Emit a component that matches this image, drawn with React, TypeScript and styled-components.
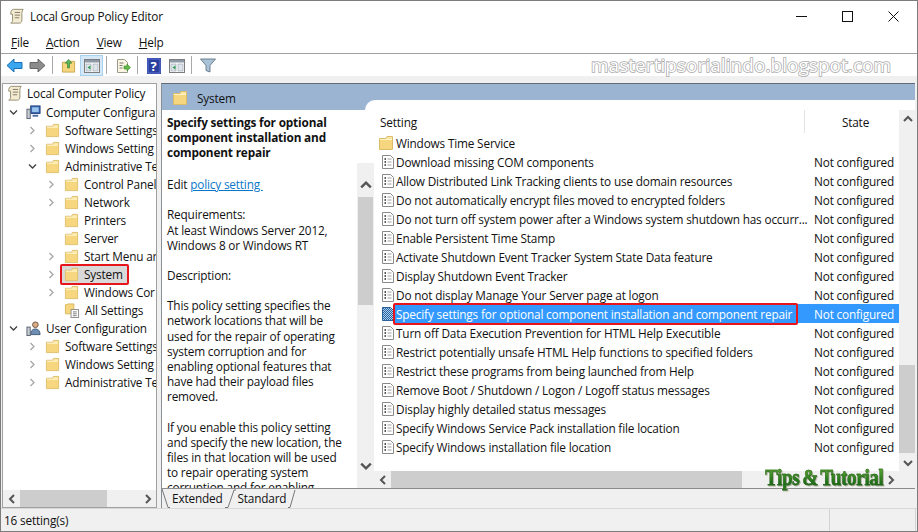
import styled, { createGlobalStyle } from "styled-components";

const GlobalStyle = createGlobalStyle`
	html, body {
		margin: 0;
		padding: 0;
		background: #f0f0f0;
	}
	* {
		box-sizing: border-box;
	}
	svg {
		flex-shrink: 0;
	}
`;

const FOLDERS = "#f6d67e";

const Folder = ({ size = 15 }: { size?: number }) => (
	<svg width={size} height={size} viewBox="0 0 16 16">
		<path d="M1.5 3.5V14.500h13V1.500H9L8 3.500z" fill="#fbe7a6" stroke="#dcbc68" />
		<rect x="2" y="5" width="12" height="9" fill={FOLDERS} />
		<path d="M2 4.500h12" stroke="#fff3c8" />
	</svg>
);

const PolicyIcon = ({ selected = false }: { selected?: boolean }) => (
	<svg width="14" height="16" viewBox="0 0 14 16">
		<defs>
			<pattern id="dither" width="2" height="2" patternUnits="userSpaceOnUse">
				<rect width="2" height="2" fill="#a9d0f5" />
				<rect width="1" height="1" fill="#2a6299" />
				<rect x="1" y="1" width="1" height="1" fill="#2a6299" />
			</pattern>
		</defs>
		<path
			d="M1.500 1.500h8l3 3v10h-11z"
			fill={selected ? "url(#dither)" : "#fff"}
			stroke={selected ? "#2a6299" : "#8a8a8a"}
		/>
		{!selected && (
			<>
				<path d="M3.500 5h1.500M3.500 8h1.500M3.500 11h1.500" stroke="#222" strokeWidth="1.400" />
				<path d="M6.500 5h4M6.500 8h4M6.500 11h4" stroke="#a0a0a0" />
			</>
		)}
	</svg>
);

const Scroll = ({ size = 16 }: { size?: number }) => (
	<svg width={size} height={size} viewBox="0 0 18 18">
		<path d="M5 1.500h11c-1 1-1.500 3-1.500 5v7c0 2-1 3.500-2.500 3.500H2c1-.5 2-1.500 2-3V7H2C1.500 4.500 3 1.500 5 1.500z" fill="#f4ecd2" stroke="#8c8468" />
		<path d="M6.500 5h6M6.500 8h6M6.500 11h5" stroke="#77705a" />
	</svg>
);

const Computer = () => (
	<svg width="15" height="16" viewBox="0 0 16 16">
		<rect x="5" y="1.500" width="10" height="8" fill="#3e6fb8" stroke="#1f3f78" />
		<rect x="6.500" y="3" width="7" height="5" fill="#9cc5ee" />
		<rect x="1" y="5" width="3.500" height="10" fill="#c9ced6" stroke="#56606e" />
		<path d="M7 11h6v2H7z" fill="#4b6aa0" />
	</svg>
);

const UserIcon = () => (
	<svg width="15" height="17" viewBox="0 0 16 17">
		<circle cx="10" cy="4.500" r="3" fill="#d9ad86" stroke="#6c5240" />
		<path d="M5 15c0-4 2-6 5-6s5 2 5 6z" fill="#6f8fb4" stroke="#3f5874" />
		<rect x="1" y="7" width="3.500" height="9" fill="#c9ced6" stroke="#56606e" />
	</svg>
);

const AllSettingsIcon = () => (
	<svg width="16" height="17" viewBox="0 0 17 17">
		<path d="M1.500 2.500V12h9V1.500H5z" fill={FOLDERS} stroke="#d9b65c" />
		<rect x="7.500" y="7.500" width="8" height="8.500" fill="#fff" stroke="#8a8a8a" />
		<path d="M9.500 10h4M9.500 12h4M9.500 14h4" stroke="#777" />
	</svg>
);

const ROTATION = { right: 0, down: 90, left: 180, up: 270 };

const ChevronSvg = styled.svg<{ $dir: keyof typeof ROTATION }>`
	transform: rotate(${(p) => ROTATION[p.$dir]}deg);
`;

const Chevron = ({ dir, size = 10 }: { dir: keyof typeof ROTATION; size?: number }) => (
	<ChevronSvg $dir={dir} width={size} height={size} viewBox="0 0 10 10">
		<path d="M3 1l4 4-4 4" fill="none" stroke="#555" strokeWidth="2" />
	</ChevronSvg>
);

const TreeChevron = ({ dir }: { dir: "right" | "down" }) => (
	<svg width="9" height="9" viewBox="0 0 9 9">
		{dir === "right" ? (
			<path d="M2.500 1l3.500 3.500L2.500 8" fill="none" stroke="#a6a6a6" strokeWidth="1.300" />
		) : (
			<path d="M1 2.500l3.500 3.500L8 2.500" fill="none" stroke="#404040" strokeWidth="1.300" />
		)}
	</svg>
);

const BackIcon = () => (
	<svg width="17" height="15" viewBox="0 0 17 15">
		<path d="M8 1L1 7.500 8 14v-3.500h8v-6H8z" fill="#3aa6ee" stroke="#1a6fb5" />
	</svg>
);

const ForwardIcon = () => (
	<svg width="17" height="15" viewBox="0 0 17 15">
		<path d="M9 1l7 6.500L9 14v-3.500H1v-6h8z" fill="#8c8c8c" stroke="#666" />
	</svg>
);

const UpIcon = () => (
	<svg width="15" height="16" viewBox="0 0 16 16">
		<path d="M1.500 4v10.500h13V3H7L6 4z" fill={FOLDERS} stroke="#c9a650" />
		<path d="M8 1L4.500 5H7v5h2V5h2.500z" fill="#5cb85c" stroke="#2f7d32" strokeWidth=".7" />
	</svg>
);

const PaneIcon = ({ accent }: { accent: string }) => (
	<svg width="16" height="14" viewBox="0 0 16 14">
		<rect x=".5" y=".5" width="15" height="13" fill="#fff" stroke="#7d7d7d" />
		<rect x="1" y="1" width="14" height="2.500" fill="#8d99a8" />
		<rect x="2" y="5" width="5" height="7" fill="#dde3ea" stroke="#9aa3ad" strokeWidth=".6" />
		<rect x="9" y="5" width="5" height="7" fill="#dde3ea" stroke="#9aa3ad" strokeWidth=".6" />
		<path d="M6.500 6.500L3.500 8.500l3 2z" fill={accent} />
	</svg>
);

const ExportIcon = () => (
	<svg width="16" height="16" viewBox="0 0 16 16">
		<path d="M2.500 1.500h7l3 3v10h-10z" fill="#fbf6e4" stroke="#9a9a8a" />
		<path d="M4.500 5h4M4.500 7.500h3M4.500 10h3" stroke="#777" />
		<path d="M9 8h3V6l3.500 3.500L12 13v-2H9z" fill="#62b94a" stroke="#3a8a2a" strokeWidth=".6" />
	</svg>
);

const HelpIcon = () => (
	<svg width="14" height="16" viewBox="0 0 14 16">
		<rect width="14" height="16" fill="#2b3f9e" />
		<rect x="1" y="1" width="12" height="14" fill="none" stroke="#5f74d0" />
	</svg>
);

const FilterIcon = () => (
	<svg width="16" height="15" viewBox="0 0 16 15">
		<path d="M.5 1h15L10 7.500V14l-4-1.500v-5z" fill="#a9c2d8" stroke="#6f7f8e" />
	</svg>
);

const MinimizeIcon = () => (
	<svg width="11" height="11" viewBox="0 0 11 11">
		<path d="M0 5.500h11" stroke="#111" />
	</svg>
);

const MaximizeIcon = () => (
	<svg width="11" height="11" viewBox="0 0 11 11">
		<rect x=".5" y=".5" width="10" height="10" fill="none" stroke="#111" />
	</svg>
);

const CloseIcon = () => (
	<svg width="11" height="11" viewBox="0 0 11 11">
		<path d="M.5.500l10 10M10.500.500l-10 10" stroke="#111" />
	</svg>
);

const Window = styled.div`
	position: relative;
	display: flex;
	flex-direction: column;
	width: 918px;
	height: 532px;
	overflow: hidden;
	background: #f0f0f0;
	border: 1px solid #7c7c7c;
	font-family: "Open Sans", "Noto Sans", sans-serif;
	font-size: 11.8px;
	letter-spacing: -0.17px;
	color: #111;
`;

const TitleBar = styled.div`
	display: flex;
	align-items: center;
	height: 30px;
	padding: 0 0 0 8px;
	background: #fff;
`;

const TitleText = styled.span`
	margin-left: 5px;
	flex: 1;
`;

const WindowButton = styled.div`
	display: flex;
	align-items: center;
	justify-content: center;
	width: 45px;
	height: 28px;
	margin-right: 1px;
`;

const MenuBar = styled.div`
	display: flex;
	align-items: center;
	gap: 17px;
	height: 23px;
	padding: 0 0 0 10px;
	background: #fff;
	border-bottom: 1px solid #a0a0a0;
`;

const Toolbar = styled.div`
	display: flex;
	align-items: flex-end;
	height: 22px;
	padding-left: 2px;
	background: #fff;
`;

const ToolButton = styled.div<{ $active?: boolean }>`
	display: flex;
	align-items: center;
	justify-content: center;
	width: 23px;
	height: 21px;
	background: ${(p) => (p.$active ? "#d5e8f7" : "transparent")};
	border: 1px solid ${(p) => (p.$active ? "#a9d2ee" : "transparent")};
`;

const HelpButton = styled(ToolButton)`
	position: relative;
	&::after {
		content: "?";
		position: absolute;
		color: #fff;
		font-weight: 700;
		font-size: 13px;
	}
`;

const ToolDivider = styled.div`
	width: 1px;
	height: 18px;
	margin: 0 4px 2px 3px;
	background: #a8a8a8;
`;

const Body = styled.div`
	display: flex;
	flex: 1;
	gap: 4px;
	min-height: 0;
	padding: 7px 2px 0 1px;
`;

const TreePane = styled.div`
	display: flex;
	flex-direction: column;
	width: 155px;
	height: 425px;
	background: #fff;
	border: 1px solid #a0a0a0;
`;

const TreeList = styled.div`
	flex: 1;
	overflow: hidden;
`;

const TreeRow = styled.div<{ $depth: number; $top?: boolean }>`
	display: flex;
	align-items: center;
	height: 18px;
	margin-bottom: ${(p) => (p.$top ? 1 : 0)}px;
	padding-left: ${(p) => (p.$top ? 4 : 6 + p.$depth * 19)}px;
	white-space: nowrap;
`;

const TreeArrow = styled.span`
	display: inline-flex;
	justify-content: center;
	flex-shrink: 0;
	width: 9px;
	margin-right: 8px;
`;

const TreeLabel = styled.span<{ $top?: boolean }>`
	margin-left: ${(p) => (p.$top ? 1 : 2)}px;
	padding: 0 3px;
`;

const SelectedBox = styled.span`
	display: inline-flex;
	align-items: center;
	height: 21px;
	margin-left: -4px;
	padding: 0 1px 0 2px;
	background: #d9d9d9;
	border: 2px solid #e8141c;
	border-radius: 2px;
`;

const HScroll = styled.div`
	display: flex;
	align-items: center;
	height: 17px;
	flex-shrink: 0;
	background: #f0f0f0;
`;

const ScrollCap = styled.span`
	display: flex;
	align-items: center;
	justify-content: center;
	width: 17px;
	height: 17px;
	flex-shrink: 0;
`;

const Track = styled.div`
	flex: 1;
	height: 100%;
`;

const Thumb = styled.div<{ $w: number }>`
	width: ${(p) => p.$w}px;
	height: 100%;
	background: #cdcdcd;
`;

const DetailPane = styled.div`
	position: relative;
	display: flex;
	flex-direction: column;
	flex: 1;
	min-width: 0;
	height: 425px;
	border-top: 1px solid #5f6b78;
	border-left: 1px solid #8a8f96;
`;

const DetailHeader = styled.div`
	display: flex;
	align-items: flex-start;
	gap: 9px;
	height: 16px;
	padding: 6px 0 0 10px;
	background: #9ab4d2;
	z-index: 1;
`;

const HeaderLabel = styled.span`
	line-height: 16px;
`;

const Content = styled.div`
	position: relative;
	display: flex;
	height: 388px;
	background: #9ab4d2;
`;

const DescColumn = styled.div`
	display: flex;
	flex-direction: column;
	width: 203px;
	flex-shrink: 0;
	padding-top: 10px;
`;

const DescBody = styled.div`
	flex: 1;
	padding: 4.5px 20px 0 5px;
	background: #fff;
	line-height: 15.2px;
	overflow: hidden;
	p {
		margin: 0 0 15px;
	}
	a {
		color: #0a78c8;
		text-decoration: underline;
	}
`;

const DescTitle = styled.p`
	font-weight: 700;
	padding-bottom: 2px;
`;

const ListColumn = styled.div`
	display: flex;
	flex-direction: column;
	flex: 1;
	min-width: 0;
	background: #fff;
	border-top-left-radius: 10px;
`;

const MidScroll = styled.div`
	position: absolute;
	left: 195px;
	top: 63px;
	display: flex;
	flex-direction: column;
	width: 17px;
	height: 325px;
	padding: 13px 0 14px;
	background: #f0f0f0;
`;

const MidTrack = styled.div`
	flex: 1;
	padding: 4px 1px 0;
`;

const MidThumb = styled.div`
	height: 108px;
	background: #cdcdcd;
`;

const ListMain = styled.div`
	display: flex;
	flex: 1;
	min-height: 0;
`;

const ListRows = styled.div`
	flex: 1;
	min-width: 0;
	overflow: hidden;
`;

const HeaderRow = styled.div`
	display: flex;
	align-items: center;
	height: 33px;
	padding: 10px 0 0 15px;
`;

const HeaderName = styled.span`
	flex: 1;
`;

const HeaderState = styled.span`
	display: flex;
	align-items: center;
	justify-content: center;
	width: 95px;
	height: 23px;
	padding-left: 7px;
	border-left: 1px solid #e3e3e3;
`;

const Row = styled.div`
	display: flex;
	align-items: center;
	height: 19px;
	padding-left: 15px;
	white-space: nowrap;
`;

const RowIcon = styled.span`
	display: flex;
	align-items: center;
	justify-content: center;
	width: 15px;
	margin-right: 1px;
`;

const RowFolderIcon = styled(RowIcon)`
	justify-content: flex-start;
	width: 17px;
	margin-left: -2px;
`;

const RowBody = styled.div<{ $selected?: boolean }>`
	display: flex;
	align-items: center;
	flex: 1;
	height: 19px;
	background: ${(p) => (p.$selected ? "#3399ff" : "transparent")};
	color: ${(p) => (p.$selected ? "#fff" : "#111")};
`;

const RowName = styled.span<{ $selected?: boolean }>`
	display: flex;
	align-items: center;
	flex-shrink: 0;
	width: ${(p) => (p.$selected ? 405 : 418)}px;
	height: ${(p) => (p.$selected ? 22 : 19)}px;
	${(p) =>
		p.$selected &&
		`
		margin-left: -3px;
		margin-right: 16px;
		padding-left: 1px;
		background: #3399ff;
		border: 2px solid #e8141c;
		border-radius: 2px;
		`}
`;

const VScroll = styled.div`
	display: flex;
	flex-direction: column;
	width: 16px;
	flex-shrink: 0;
	margin-top: 10px;
	background: #f0f0f0;
`;

const VTrack = styled.div`
	flex: 1;
	padding-top: 238px;
`;

const VThumb = styled.div`
	height: 88px;
	background: #cdcdcd;
`;

const ListHScroll = styled(HScroll)`
	padding: 0 16px 0 9px;
`;

const TabStrip = styled.div`
	display: flex;
	align-items: flex-start;
	height: 20px;
	padding-top: 1px;
	background: #f0f0f0;
`;

const BottomRule = styled.div`
	position: absolute;
	left: 0;
	right: 0;
	top: 404px;
	height: 1px;
	background: #8c8c8c;
`;

const TabLabel = styled.span`
	display: flex;
	align-items: center;
	height: 18px;
	padding: 0 2px;
`;

const StatusBar = styled.div`
	display: flex;
	align-items: center;
	height: 23px;
	padding-left: 3px;
	background: #f0f0f0;
	border-top: 1px solid #d8d8d8;
`;

const StatusText = styled.span`
	flex: 1;
`;

const StatusCell = styled.span`
	width: 87px;
	height: 22px;
	margin-right: 1px;
	border-left: 1px solid #d4d4d4;
	border-right: 1px solid #d4d4d4;
`;

const Watermark = styled.div`
	position: absolute;
	left: 590px;
	top: 51px;
	font-size: 18.900px;
	letter-spacing: 0.1px;
	color: #fff;
	-webkit-text-stroke: 1.600px #ababab;
	paint-order: stroke fill;
	white-space: nowrap;
`;

const Badge = styled.div`
	position: absolute;
	left: 764px;
	top: 463px;
	font-family: "Liberation Serif", serif;
	font-weight: 700;
	font-size: 24px;
	letter-spacing: -0.5px;
	word-spacing: -2px;
	color: transparent;
	background: linear-gradient(#6cb83a, #1f6d1a 70%, #2f7f22);
	-webkit-background-clip: text;
	background-clip: text;
	-webkit-text-stroke: 0.4px #1d5c12;
	filter: drop-shadow(1px 1px 0.5px #a8a898);
	white-space: nowrap;
	transform: scaleX(0.8);
	transform-origin: left center;
`;

type TreeItem = {
	label: string;
	depth: number;
	arrow?: "right" | "down";
	icon?: "folder" | "computer" | "user" | "all";
	selected?: boolean;
};

const TREE: TreeItem[] = [
	{ label: "Computer Configura", depth: 0, arrow: "down", icon: "computer" },
	{ label: "Software Settings", depth: 1, arrow: "right" },
	{ label: "Windows Setting", depth: 1, arrow: "right" },
	{ label: "Administrative Te", depth: 1, arrow: "down" },
	{ label: "Control Panel", depth: 2, arrow: "right" },
	{ label: "Network", depth: 2, arrow: "right" },
	{ label: "Printers", depth: 2 },
	{ label: "Server", depth: 2 },
	{ label: "Start Menu ar", depth: 2, arrow: "right" },
	{ label: "System", depth: 2, arrow: "right", selected: true },
	{ label: "Windows Cor", depth: 2, arrow: "right" },
	{ label: "All Settings", depth: 2, icon: "all" },
	{ label: "User Configuration", depth: 0, arrow: "down", icon: "user" },
	{ label: "Software Settings", depth: 1, arrow: "right" },
	{ label: "Windows Setting", depth: 1, arrow: "right" },
	{ label: "Administrative Te", depth: 1, arrow: "right" },
];

const SETTINGS = [
	"Download missing COM components",
	"Allow Distributed Link Tracking clients to use domain resources",
	"Do not automatically encrypt files moved to encrypted folders",
	"Do not turn off system power after a Windows system shutdown has occurr...",
	"Enable Persistent Time Stamp",
	"Activate Shutdown Event Tracker System State Data feature",
	"Display Shutdown Event Tracker",
	"Do not display Manage Your Server page at logon",
	"Specify settings for optional component installation and component repair",
	"Turn off Data Execution Prevention for HTML Help Executible",
	"Restrict potentially unsafe HTML Help functions to specified folders",
	"Restrict these programs from being launched from Help",
	"Remove Boot / Shutdown / Logon / Logoff status messages",
	"Display highly detailed status messages",
	"Specify Windows Service Pack installation file location",
	"Specify Windows installation file location",
];

const SELECTED = "Specify settings for optional component installation and component repair";

const treeIcon = (icon?: TreeItem["icon"]) => {
	if (icon === "computer") return <Computer />;
	if (icon === "user") return <UserIcon />;
	if (icon === "all") return <AllSettingsIcon />;
	return <Folder />;
};

const App = () => {
	return (
		<>
			<GlobalStyle />
			<Window>
				<TitleBar>
					<Scroll />
					<TitleText>Local Group Policy Editor</TitleText>
					<WindowButton><MinimizeIcon /></WindowButton>
					<WindowButton><MaximizeIcon /></WindowButton>
					<WindowButton><CloseIcon /></WindowButton>
				</TitleBar>
				<MenuBar>
					<span><u>F</u>ile</span>
					<span><u>A</u>ction</span>
					<span><u>V</u>iew</span>
					<span><u>H</u>elp</span>
				</MenuBar>
				<Toolbar>
					<ToolButton><BackIcon /></ToolButton>
					<ToolButton><ForwardIcon /></ToolButton>
					<ToolDivider />
					<ToolButton><UpIcon /></ToolButton>
					<ToolButton $active><PaneIcon accent="#2e9e4f" /></ToolButton>
					<ToolDivider />
					<ToolButton><ExportIcon /></ToolButton>
					<ToolDivider />
					<HelpButton><HelpIcon /></HelpButton>
					<ToolButton><PaneIcon accent="#2e9e4f" /></ToolButton>
					<ToolDivider />
					<ToolButton><FilterIcon /></ToolButton>
				</Toolbar>
				<Body>
					<TreePane>
						<TreeList>
							<TreeRow $depth={0} $top>
								<Scroll />
								<TreeLabel $top>Local Computer Policy</TreeLabel>
							</TreeRow>
							{TREE.map((item, i) => (
								<TreeRow key={i} $depth={item.depth}>
									<TreeArrow>{item.arrow && <TreeChevron dir={item.arrow} />}</TreeArrow>
									{item.selected ? (
										<SelectedBox>
											{treeIcon(item.icon)}
											<TreeLabel>{item.label}</TreeLabel>
										</SelectedBox>
									) : (
										<>
											{treeIcon(item.icon)}
											<TreeLabel>{item.label}</TreeLabel>
										</>
									)}
								</TreeRow>
							))}
						</TreeList>
						<HScroll>
							<ScrollCap><Chevron dir="left" /></ScrollCap>
							<Track><Thumb $w={87} /></Track>
							<ScrollCap><Chevron dir="right" /></ScrollCap>
						</HScroll>
					</TreePane>
					<DetailPane>
						<DetailHeader>
							<Folder size={16} />
							<HeaderLabel>System</HeaderLabel>
						</DetailHeader>
						<Content>
							<DescColumn>
								<DescBody>
									<DescTitle>
										Specify settings for optional component installation and component repair
									</DescTitle>
									<p>
										Edit <a>policy setting&nbsp;</a>
									</p>
									<p>
										Requirements:
										<br />
										At least Windows Server 2012, Windows 8 or Windows RT
									</p>
									<p>Description:</p>
									<p>
										This policy setting specifies the network locations that will be used for the repair of
										operating system corruption and for enabling optional features that have had their payload
										files removed.
									</p>
									<p>
										If you enable this policy setting and specify the new location, the files in that location
										will be used to repair operating system corruption and for enabling
									</p>
								</DescBody>
							</DescColumn>
							<ListColumn>
								<ListMain>
									<ListRows>
										<HeaderRow>
											<HeaderName>Setting</HeaderName>
											<HeaderState>State</HeaderState>
										</HeaderRow>
										<Row>
											<RowFolderIcon><Folder size={16} /></RowFolderIcon>
											<RowBody>
												<RowName>Windows Time Service</RowName>
											</RowBody>
										</Row>
										{SETTINGS.map((name) => {
											const selected = name === SELECTED;
											return (
												<Row key={name}>
													<RowIcon><PolicyIcon selected={selected} /></RowIcon>
													<RowBody $selected={selected}>
														<RowName $selected={selected}>{name}</RowName>
														<span>Not configured</span>
													</RowBody>
												</Row>
											);
										})}
									</ListRows>
									<VScroll>
										<ScrollCap><Chevron dir="up" /></ScrollCap>
										<VTrack><VThumb /></VTrack>
										<ScrollCap><Chevron dir="down" /></ScrollCap>
									</VScroll>
								</ListMain>
								<ListHScroll>
									<ScrollCap><Chevron dir="left" /></ScrollCap>
									<Track><Thumb $w={351} /></Track>
									<ScrollCap><Chevron dir="right" /></ScrollCap>
								</ListHScroll>
							</ListColumn>
							<MidScroll>
								<ScrollCap><Chevron dir="up" size={12} /></ScrollCap>
								<MidTrack><MidThumb /></MidTrack>
								<ScrollCap><Chevron dir="down" size={12} /></ScrollCap>
							</MidScroll>
						</Content>
						<TabStrip>
							<svg width="8" height="19" viewBox="0 0 8 19">
								<path d="M0 0l6 18.500h2" stroke="#777" fill="none" />
							</svg>
							<TabLabel>Extended</TabLabel>
							<svg width="11" height="19" viewBox="0 0 11 19">
								<path d="M0 18.500h3L9 1h2" stroke="#777" fill="none" />
							</svg>
							<TabLabel>Standard</TabLabel>
							<svg width="9" height="19" viewBox="0 0 9 19">
								<path d="M0 18.500h2L7 1" stroke="#777" fill="none" />
							</svg>
						</TabStrip>
						<BottomRule />
					</DetailPane>
				</Body>
				<StatusBar>
					<StatusText>16 setting(s)</StatusText>
					<StatusCell />
				</StatusBar>
				<Watermark>mastertipsorialindo.blogspot.com</Watermark>
				<Badge>Tips &amp; Tutorial</Badge>
			</Window>
		</>
	);
};

export default App;
